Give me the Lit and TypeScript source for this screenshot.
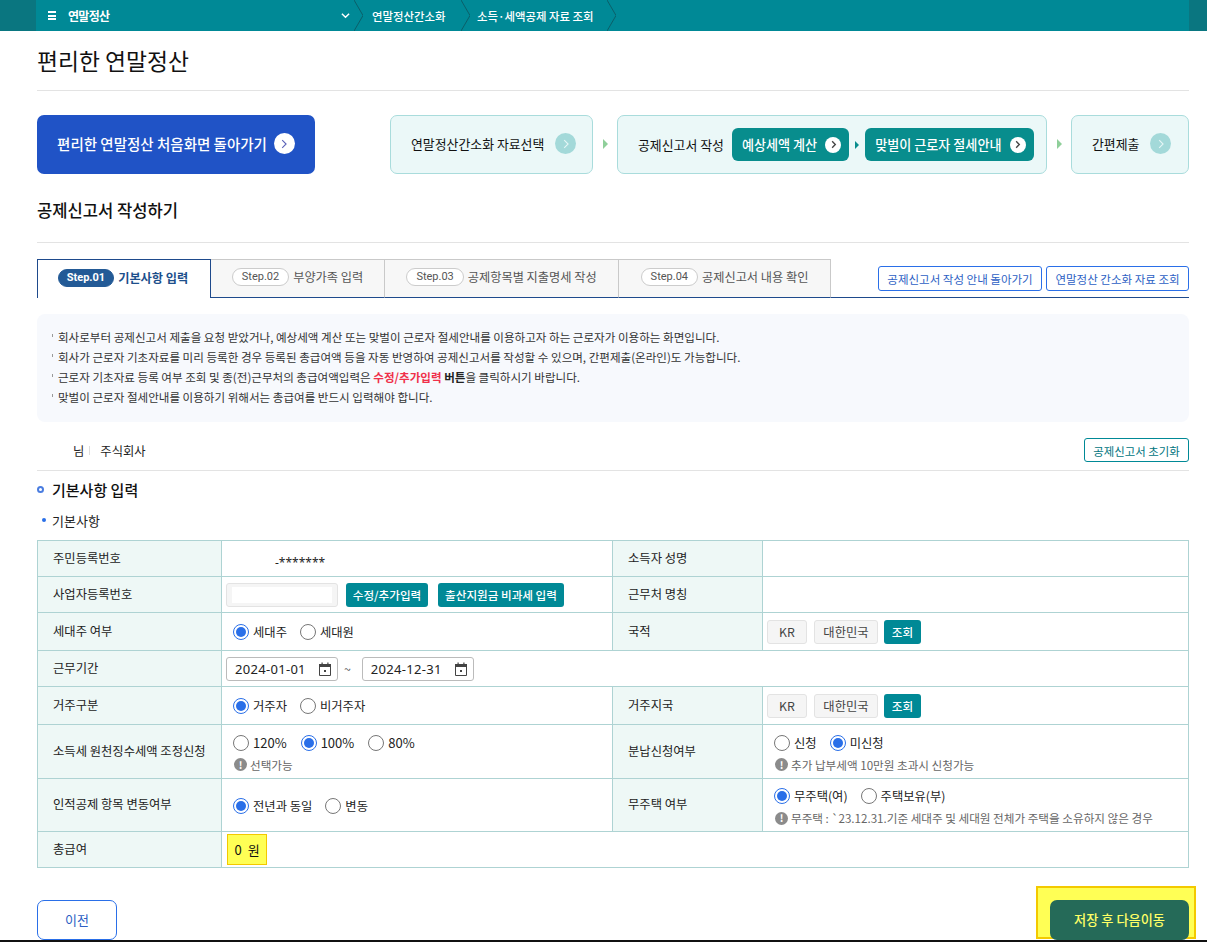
import { LitElement, html, css, svg } from "lit";
import { customElement } from "lit/decorators.js";

const chev = (color: string) => html`<svg viewBox="0 0 20 20" width="12" height="12"><path d="M7 3.5l6.5 6.5-6.5 6.5" fill="none" stroke="${color}" stroke-width="1.8"/></svg>`;
const chevS = html`<svg viewBox="0 0 20 20" width="9" height="9"><path d="M7 3l7 7-7 7" fill="none" stroke="#444" stroke-width="3"/></svg>`;
const crumbSep = svg`<path d="M0 0l9 15.5L0 31" fill="none" stroke="#0b5f69" stroke-width="1"/>`;
const cal = html`<svg class="cal" viewBox="0 0 14 14" width="14" height="14"><path d="M1.5 3h11v10.5h-11z" fill="none" stroke="#444" stroke-width="1"/><path d="M1 2h12v3H1z" fill="#444"/><path d="M3.5 .5h1.2v2H3.500z M9.300 .5h1.200v2H9.300z" fill="#444"/><rect x="6" y="8" width="2" height="2" fill="#444"/></svg>`;

const radio = (label: string, on = false, num = false) => html`<span class=${num ? "radio num" : "radio"}><i class=${on ? "dot on" : "dot"}></i>${label}</span>`;
const note = (t: string) => html`<div class="note"><i class="bang">!</i>${t}</div>`;

@customElement("app-root")
export class AppRoot extends LitElement {
  static styles = css`
    :host { display: block; height: 943px; overflow: hidden; background: #fff; color: #222;
      font-family: "Noto Sans CJK KR", "Noto Sans", sans-serif; font-size: 12.3px; }
    * { box-sizing: border-box; }
    .frame { height: 942px; border-bottom: 2px solid #111; overflow: hidden; }
    .bar { height: 31px; background: #008996; display: flex; color: #fff; font-size: 11.4px; font-weight: 500; }
    .bar .edge { width: 36px; background: #0a7680; }
    .bar .edge.r { width: 18px; margin-left: auto; }
    .bar .first { width: 318px; display: flex; align-items: center; padding-left: 12px; gap: 12px; font-size: 12px; font-weight: 700; letter-spacing: -.7px; }
    .burger { width: 8px; height: 9px; border-top: 2px solid #fff; border-bottom: 2px solid #fff; position: relative; flex: none; }
    .burger::after { content: ""; position: absolute; left: 0; right: 0; top: 1.500px; height: 2px; background: #fff; }
    .down { margin-left: auto; margin-right: 4px; display: flex; }
    .crumb { display: flex; align-items: center; white-space: nowrap; }
    .crumb svg { flex: none; }
    .crumb span { padding: 0 0 0 9px; }
    .c1 { width: 107px; }
    .c2 { width: 146px; }
    .c2 span { padding-left: 7px; }
    .main { padding: 0 18px 0 37px; }
    h1 { font-size: 22.8px; font-weight: 400; margin: 0; height: 60px; line-height: 59px; color: #111; border-bottom: 1px solid #e3e3e3; }
    .flow { display: flex; align-items: stretch; height: 59px; margin-top: 24px; }
    .home { width: 278px; background: #2053c6; border-radius: 7px; color: #fff; font-size: 14.5px; font-weight: 500; display: flex; align-items: center; justify-content: center; gap: 7px; padding-bottom: 2px; }
    .circ { width: 21px; height: 21px; border-radius: 50%; background: #fff; display: flex; align-items: center; justify-content: center; flex: none; }
    .circ.pale { background: #a3d9d9; }
    .circ.sm { width: 16px; height: 16px; }
    .step { background: #ebf8f8; border: 1px solid #a9dcdc; border-radius: 7px; display: flex; align-items: center; color: #111; font-size: 12.9px; }
    .s1 { width: 203px; margin-left: 75px; padding: 0 0 2px 20px; gap: 11px; }
    .s2 { width: 430px; padding-left: 20px; }
    .s3 { width: 118px; padding: 0 0 2px 20px; gap: 11px; }
    .arr { width: 24px; display: flex; align-items: center; justify-content: center; padding-bottom: 2px; }
    .arr i { border-left: 5px solid #8fcf9a; border-top: 5px solid transparent; border-bottom: 5px solid transparent; }
    .gap8 { width: 8px; }
    .pill { height: 33px; background: #088d8d; color: #fff; border-radius: 6px; display: flex; align-items: center; padding: 0 8px 0 10px; gap: 8px; font-size: 13.1px; font-weight: 500; white-space: nowrap; }
    .parr { width: 16px; display: flex; justify-content: center; }
    .parr i { border-left: 4px solid #088d8d; border-top: 4px solid transparent; border-bottom: 4px solid transparent; }
    h2 { font-size: 16.6px; font-weight: 500; margin: 24px 0 0; height: 45px; line-height: 24px; color: #111; border-bottom: 1px solid #e3e3e3; }
    .tabs { display: flex; height: 39px; margin-top: 16px; border-bottom: 1px solid #1e4a8c; }
    .tab { height: 39px; background: #f7f7f7; border: 1px solid #c9c9c9; border-bottom: 1px solid #1e4a8c; border-left: 0; display: flex; align-items: center; justify-content: center; padding-bottom: 3px; gap: 4px; color: #555; font-size: 12.2px; }
    .tab.on { background: #fff; color: #1d4f8c; font-weight: 700; border: 1px solid #1e4a8c; border-bottom: 0; height: 39px; padding-right: 2px; }
    .t1 { width: 174px; } .t2 { width: 174px; } .t3 { width: 234px; } .t4 { width: 212px; }
    .badge { border: 1px solid #ccc; border-radius: 10px; height: 18px; padding: 0 9px; font-size: 11px; line-height: 16px; color: #555; background: #fff; font-family: "Roboto", "Noto Sans", sans-serif; }
    .on .badge { background: #235a96; border-color: #235a96; color: #fff; padding: 0 8px; }
    .tabbtns { margin-left: auto; display: flex; gap: 4px; padding-top: 7px; }
    .obtn { height: 25px; border: 1px solid #2a6fe8; border-radius: 3px; color: #2d5fc4; background: #fff; font: inherit; font-size: 11.5px; padding: 0; display: flex; align-items: center; justify-content: center; }
    .o1 { width: 164px; } .o2 { width: 143px; }
    .info { margin: 16px 0 0; height: 108px; background: #f7f9fd; border-radius: 8px; padding: 13px 14px; list-style: none; font-size: 11.55px; line-height: 20px; color: #333; }
    .info li { padding-left: 7px; position: relative; }
    .info li::before { content: ""; position: absolute; left: 1px; top: 7px; width: 1px; height: 3px; background: #999; }
    .info b { color: #f0304a; }
    .info .k { color: #222; font-weight: 700; }
    .user { height: 49px; padding: 17px 0 0 36px; border-bottom: 1px solid #e3e3e3; display: flex; align-items: flex-start; line-height: 24px; }
    .user .v { width: 1px; height: 9px; background: #ddd; margin: 7px 10px 0 5px; }
    .reset { margin: -1px 0 0 auto; width: 105px; height: 24px; border: 1px solid #008996; border-radius: 3px; color: #00747e; background: #fff; font: inherit; font-size: 11.4px; padding: 0; }
    h3 { margin: 0; height: 38px; font-size: 15px; font-weight: 500; display: flex; align-items: center; gap: 8px; color: #111; padding-bottom: 2px; }
    h3 i { width: 7px; height: 7px; border: 2px solid #4a7de0; border-radius: 50%; }
    h4 { margin: 0; height: 31px; font-size: 13px; font-weight: 400; display: flex; align-items: center; gap: 5px; padding-left: 5px; color: #222; padding-bottom: 9px; }
    h4 i { width: 4px; height: 4px; background: #2a6fe8; border-radius: 50%; margin-right: 1px; }
    table { border-collapse: collapse; table-layout: fixed; width: 1152px; }
    td, th { border: 1px solid #aed3d3; padding: 0 4px; font-weight: 400; text-align: left; }
    th { background: #eef8f6; padding: 0 4px 2px 15px; color: #222; }
    .lc { width: 184px; } .vc { width: 391px; } .lc2 { width: 150px; }
    .h36 { height: 36px; } .h38 { height: 38px; } .h54 { height: 54px; } .h53 { height: 53px; }
    td.pt { padding-top: 2px; }
    .line { display: flex; align-items: center; gap: 4px; }
    .radio { display: inline-flex; align-items: center; gap: 4px; margin: 0 8px 0 7px; line-height: 18px; color: #222; vertical-align: middle; }
    .radio + .radio { margin-left: 5px; }
    .radio.num { font-size: 13px; }
    .radio.num + .radio.num { margin-left: 6px; }
    .dot { width: 16px; height: 16px; border-radius: 50%; border: 1px solid #777; display: inline-flex; align-items: center; justify-content: center; flex: none; }
    .dot.on { border-color: #2a6fe8; }
    .dot.on::after { content: ""; width: 10px; height: 10px; border-radius: 50%; background: #2a6fe8; }
    .note { display: flex; align-items: center; gap: 3px; margin: 5px 0 0 8px; font-size: 11.6px; color: #666; line-height: 16px; }
    .bang { width: 13px; height: 13px; border-radius: 50%; background: #8b8b8b; color: #fff; font-size: 10px; font-weight: 700; font-style: normal; display: flex; align-items: center; justify-content: center; }
    .tbtn { height: 24px; border: 0; border-radius: 3px; background: #008996; color: #fff; font: inherit; font-size: 11.6px; font-weight: 500; padding: 0; }
    .bw1 { width: 82px; margin-left: 4px; } .bw2 { width: 126px; margin-left: 6px; } .bw3 { width: 37px; margin-left: 2px; }
    .ro { height: 24px; background: #f5f5f5; border: 1px solid #e3e3e3; border-radius: 3px; display: inline-flex; align-items: center; justify-content: center; color: #444; }
    .biz { width: 112px; padding: 3px 5px; }
    .biz i { display: block; width: 100%; height: 100%; background: #fff; }
    .kr { width: 40px; } .nm { width: 64px; margin-left: 3px; }
    .date { width: 112px; height: 24px; border: 1px solid #bbb; border-radius: 3px; display: inline-flex; align-items: center; justify-content: space-between; padding: 0 5px 0 8px; font-size: 13px; letter-spacing: .3px; color: #222; font-family: "Noto Sans", sans-serif; vertical-align: middle; }
    .cal { flex: none; }
    .til { margin: 0 11px 0 6px; color: #555; vertical-align: middle; }
    .sum { width: 40px; height: 31px; background: #ffff55; border: 1px solid #f3c900; display: inline-flex; align-items: center; justify-content: center; gap: 6px; margin: 0 1px; font-size: 13px; color: #111; vertical-align: middle; }
    .foot { display: flex; justify-content: space-between; margin-top: 32px; }
    .prev { width: 80px; height: 40px; border: 1px solid #2a6fe8; border-radius: 7px; background: #fff; color: #2d5fc4; font: inherit; font-size: 13px; padding: 0 0 2px; }
    .next { position: relative; width: 139px; height: 40px; border: 0; border-radius: 7px; background: #256a58; color: #ffff66; font: inherit; font-size: 13.2px; font-weight: 500; padding: 0 0 2px; }
    .hl { position: relative; width: 139px; height: 40px; }
    .hl::before { content: ""; position: absolute; left: -14px; right: -7px; top: -14px; bottom: 1px; background: #ffff55; border: 2px solid #f3c900; }
    .star { padding-left: 49px; font-family: "Noto Sans", sans-serif; font-size: 12px; padding-top: 7px; }
  `;

  render() {
    const lookup = html`<div class="line"><span class="ro kr">KR</span><span class="ro nm">대한민국</span><button class="tbtn bw3">조회</button></div>`;
    return html`<div class="frame">
      <div class="bar">
        <div class="edge"></div>
        <div class="first"><i class="burger"></i>연말정산<span class="down"><svg viewBox="0 0 10 10" width="9" height="9"><path d="M1 3l4 4 4-4" fill="none" stroke="#fff" stroke-width="1.6"/></svg></span></div>
        <div class="crumb c1"><svg width="9" height="31">${crumbSep}</svg><span>연말정산간소화</span></div>
        <div class="crumb c2"><svg width="9" height="31">${crumbSep}</svg><span>소득·세액공제 자료 조회</span></div>
        <div class="crumb"><svg width="9" height="31">${crumbSep}</svg></div>
        <div class="edge r"></div>
      </div>
      <div class="main">
        <h1>편리한 연말정산</h1>
        <div class="flow">
          <div class="home">편리한 연말정산 처음화면 돌아가기<span class="circ">${chev("#5b62b8")}</span></div>
          <div class="step s1">연말정산간소화 자료선택<span class="circ pale">${chev("#e6f6f6")}</span></div>
          <div class="arr"><i></i></div>
          <div class="step s2">공제신고서 작성
            <span class="gap8"></span>
            <div class="pill">예상세액 계산<span class="circ sm">${chevS}</span></div>
            <div class="parr"><i></i></div>
            <div class="pill">맞벌이 근로자 절세안내<span class="circ sm">${chevS}</span></div>
          </div>
          <div class="arr"><i></i></div>
          <div class="step s3">간편제출<span class="circ pale">${chev("#e6f6f6")}</span></div>
        </div>
        <h2>공제신고서 작성하기</h2>
        <div class="tabs">
          <div class="tab on t1"><span class="badge">Step.01</span>기본사항 입력</div>
          <div class="tab t2"><span class="badge">Step.02</span>부양가족 입력</div>
          <div class="tab t3"><span class="badge">Step.03</span>공제항목별 지출명세 작성</div>
          <div class="tab t4"><span class="badge">Step.04</span>공제신고서 내용 확인</div>
          <div class="tabbtns"><button class="obtn o1">공제신고서 작성 안내 돌아가기</button><button class="obtn o2">연말정산 간소화 자료 조회</button></div>
        </div>
        <ul class="info">
          <li>회사로부터 공제신고서 제출을 요청 받았거나, 예상세액 계산 또는 맞벌이 근로자 절세안내를 이용하고자 하는 근로자가 이용하는 화면입니다.</li>
          <li>회사가 근로자 기초자료를 미리 등록한 경우 등록된 총급여액 등을 자동 반영하여 공제신고서를 작성할 수 있으며, 간편제출(온라인)도 가능합니다.</li>
          <li>근로자 기초자료 등록 여부 조회 및 종(전)근무처의 총급여액입력은 <b>수정/추가입력</b> <span class="k">버튼</span>을 클릭하시기 바랍니다.</li>
          <li>맞벌이 근로자 절세안내를 이용하기 위해서는 총급여를 반드시 입력해야 합니다.</li>
        </ul>
        <div class="user">님<span class="v"></span>주식회사<button class="reset">공제신고서 초기화</button></div>
        <h3><i></i>기본사항 입력</h3>
        <h4><i></i>기본사항</h4>
        <table>
          <colgroup><col class="lc"><col class="vc"><col class="lc2"><col></colgroup>
          <tr class="h36"><th>주민등록번호</th><td><div class="star">-*******</div></td><th>소득자 성명</th><td></td></tr>
          <tr class="h36"><th>사업자등록번호</th><td><div class="line"><span class="ro biz"><i></i></span><button class="tbtn bw1">수정/추가입력</button><button class="tbtn bw2">출산지원금 비과세 입력</button></div></td><th>근무처 명칭</th><td></td></tr>
          <tr class="h38"><th>세대주 여부</th><td>${radio("세대주", true)}${radio("세대원")}</td><th>국적</th><td>${lookup}</td></tr>
          <tr class="h36"><th>근무기간</th><td colspan="3"><span class="date">2024-01-01${cal}</span><span class="til">~</span><span class="date">2024-12-31${cal}</span></td></tr>
          <tr class="h38"><th>거주구분</th><td>${radio("거주자", true)}${radio("비거주자")}</td><th>거주지국</th><td>${lookup}</td></tr>
          <tr class="h54"><th>소득세 원천징수세액 조정신청</th><td class="pt">${radio("120%", false, true)}${radio("100%", true, true)}${radio("80%", false, true)}${note("선택가능")}</td><th>분납신청여부</th><td class="pt">${radio("신청")}${radio("미신청", true)}${note("추가 납부세액 10만원 초과시 신청가능")}</td></tr>
          <tr class="h53"><th>인적공제 항목 변동여부</th><td>${radio("전년과 동일", true)}${radio("변동")}</td><th>무주택 여부</th><td class="pt">${radio("무주택(여)", true)}${radio("주택보유(부)")}${note("무주택 : `23.12.31.기준 세대주 및 세대원 전체가 주택을 소유하지 않은 경우")}</td></tr>
          <tr class="h36"><th>총급여</th><td colspan="3"><span class="sum"><span>0</span><span>원</span></span></td></tr>
        </table>
        <div class="foot"><button class="prev">이전</button><div class="hl"><button class="next">저장 후 다음이동</button></div></div>
      </div>
    </div>`;
  }
}
